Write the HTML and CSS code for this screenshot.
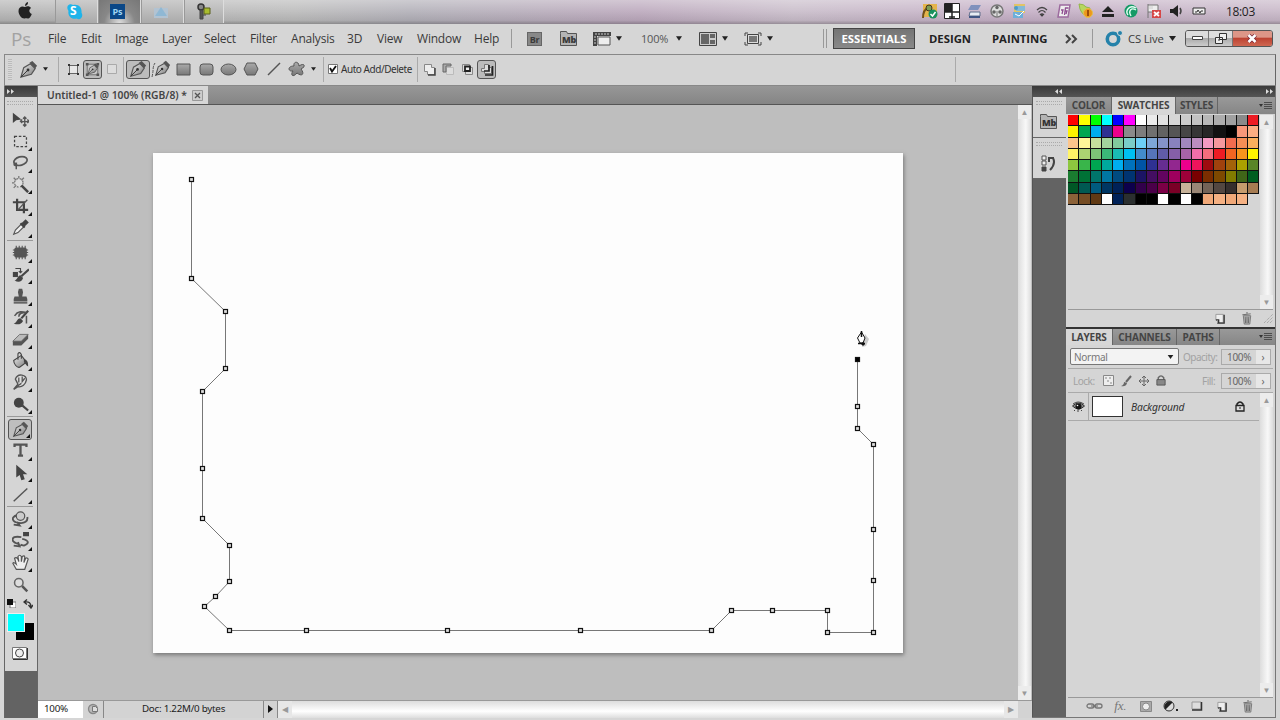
FILE: index.html
```
<!DOCTYPE html>
<html lang="en">
<head>
  <meta charset="UTF-8">
  <title>Untitled-1 @ 100% (RGB/8) *</title>
  <link rel="stylesheet" href="styles.css">
</head>
<body>
  <svg class="defs" width="0" height="0">
    <defs>
      <linearGradient id="gray" x1="0" y1="0" x2="0" y2="1"><stop offset="0" stop-color="#aaa"/><stop offset="1" stop-color="#777"/></linearGradient>
      <linearGradient id="skin" x1="0" y1="0" x2="1" y2="1"><stop offset="0" stop-color="#eee"/><stop offset="1" stop-color="#777"/></linearGradient>
      <symbol id="pen" viewBox="0 0 20 20"><path d="M2 18l3-10 7-4 5 5-4 6z" fill="url(#skin)" stroke="#555" stroke-width="1.300"/><path d="M2 18l7-7" stroke="#333"/><circle cx="9.500" cy="10.500" r="1.500" fill="#333"/><path d="M11 3l6 6 2-3-5-5z" fill="#555"/></symbol>
      <symbol id="down" viewBox="0 0 7 5"><path d="M0 0h7L3.500 5z" fill="#222"/></symbol>
      <symbol id="trash" viewBox="0 0 12 14"><path d="M2 4h8l-1 9H3z" fill="#bbb" stroke="#777"/><path d="M1 3l9-1M4 5l.5 7M6 5v7M8 5l-.5 7M5 1h2" stroke="#666"/></symbol>
      <symbol id="page" viewBox="0 0 12 12"><path d="M1.500 1.500h8v9h-5l-3-3z" fill="#eee" stroke="#999"/><path d="M10.500 2v9H3M1.500 7.500h3v3" fill="none" stroke="#333" stroke-width="1.500"/></symbol>
      <symbol id="menu" viewBox="0 0 13 8"><path d="M0 2h4L2 5z" fill="#333"/><path d="M5 .5h8M5 2.500h8M5 4.500h8M5 6.500h8" stroke="#444" stroke-width=".9"/></symbol>
      <symbol id="bridge" viewBox="0 0 17 15"><path d="M.5 2.500V.5h6l1 2h9v12H.5z" fill="#b4b4b4" stroke="#555"/></symbol>
    </defs>
  </svg>

  <header class="taskbar">
    <div class="apple"><svg width="14" height="17" viewBox="0 0 14 17"><path d="M7 5c2-1.500 5-1 6 1-2.500 1.500-2 5 .8 6-1 2.500-2.500 4.800-4 4.500-1.200-.4-2-.5-3.200 0C4 17 .5 13 .5 9 .5 5 4 3.500 7 5zM7 4c0-2 1-3.500 3-4 .2 2-1 3.800-3 4z" fill="#222"/></svg></div>
    <div class="task skype"><svg width="16" height="16" viewBox="0 0 16 16"><path d="M1 1.500C3-.5 5 .5 6 1c6-1.500 9 3 8.500 7.500C17 13 13 17 9.500 14.500 4 16 .5 11 1.500 7 0 5 0 3 1 1.500z" fill="#1eb4ea"/></svg><b>S</b></div>
    <div class="task active"><span class="ps-icon">Ps</span></div>
    <div class="task"><svg width="16" height="12" viewBox="0 0 16 12"><path d="M1 2h14v10H1z" fill="#b2c3d2"/><path d="M2 10l6-9 6 9z" fill="#8fb8d4"/></svg></div>
    <div class="task last"><svg width="14" height="17" viewBox="0 0 14 17"><circle cx="4" cy="4" r="3" fill="#888" stroke="#333" stroke-width="1.500"/><path d="M3 7h3v9H3zM6 12h3" fill="#555" stroke="#444"/><path d="M7 5h6v6H7z" fill="#a9bd2e" stroke="#5b611a"/></svg></div>
    <div class="tray">
      <svg width="16" height="16" viewBox="0 0 16 16"><path d="M1 1h14v13H1z" fill="#e4b44c"/><path d="M1 15c0-6 2-9 5-10" stroke="#71511c" stroke-width="2" fill="none"/><circle cx="7" cy="5" r="3" fill="#7c9c55" stroke="#44341c"/><circle cx="11" cy="11" r="4.500" fill="#17915d"/><path d="M8.500 11l2 2 3-4" stroke="#fff" stroke-width="1.500" fill="none"/></svg>
      <svg width="16" height="16" viewBox="0 0 16 16"><path d="M.5.5h15v15H.5z" fill="#fff" stroke="#222"/><path d="M1 1h7v8H1z" fill="#222"/><path d="M8 1v14M1 9h14M5 14h6" stroke="#222" stroke-width="1.500"/></svg>
      <svg width="16" height="16" viewBox="0 0 16 16"><path d="M4 2h10l-3 5H1z" fill="#8091bd"/><path d="M3 9h10v4H2z" fill="#e8ecf4" stroke="#606e8c"/><path d="M2 14h11" stroke="#405584" stroke-width="2"/></svg>
      <svg width="16" height="16" viewBox="0 0 16 16"><circle cx="8" cy="8" r="6" fill="#ddd" stroke="#777" stroke-width="1.500"/><circle cx="8" cy="4.500" r="1.700" fill="#666"/><circle cx="5" cy="9" r="1.800" fill="#666"/><circle cx="11" cy="9" r="1.800" fill="#666"/><path d="M8 8v5" stroke="#777"/></svg>
      <svg width="16" height="16" viewBox="0 0 16 16"><path d="M3 1h11v9H3z" fill="#e1c366"/><path d="M5 3h9v5H5z" fill="#84bad8"/><path d="M2 9h10v6H2z" fill="#6dafd9"/><path d="M4 11l4 2 5-5" stroke="#fff" fill="none"/><circle cx="5" cy="5" r="2" fill="#4c9bc9"/></svg>
      <svg width="16" height="16" viewBox="0 0 16 16"><path d="M3 7q5-5 10 0M4.500 9.500q3.500-4 7 0M6 12q2-2 4 0" stroke="#444" stroke-width="1.200" fill="none"/><circle cx="8" cy="12.500" r="1" fill="#333"/></svg>
      <svg width="16" height="16" viewBox="0 0 16 16"><path d="M4 2h10l-2 12H2z" fill="#eee" stroke="#9c6a9e" stroke-width="1.500"/><path d="M5 7h2l-1 4M8.500 12l1-7h3M9 8h2l-1 3" stroke="#8f4d91" stroke-width="1.300" fill="none"/></svg>
      <svg width="16" height="16" viewBox="0 0 16 16"><path d="M1 1q5 0 7 3l4 1-2 8q-8-1-9-12z" fill="#b7d75f" stroke="#93b748"/><circle cx="10" cy="10" r="4.500" fill="#ec981d" stroke="#e5bf4c"/><path d="M10 7v6" stroke="#853400" stroke-width="1.500"/></svg>
      <svg width="16" height="16" viewBox="0 0 16 16"><path d="M2 9l6-6 6 6zM2 11h12v3H2z" fill="#222"/></svg>
      <svg width="16" height="16" viewBox="0 0 16 16"><circle cx="8" cy="8" r="6.500" fill="#159a66"/><path d="M13 5C6 1 2 8 5 12M13 7C8 4 5 8 8 13" fill="none" stroke="#e4fff3" stroke-width="1.400"/></svg>
      <svg width="17" height="16" viewBox="0 0 17 16"><path d="M3 1v14M3 2h10v7H3" fill="#eee" stroke="#777"/><path d="M4 3h4v3H4z" fill="#ddd"/><path d="M7 7h9v8H7z" fill="#d64747"/><path d="M9 9l5 4M14 9l-5 4" stroke="#fff" stroke-width="1.700"/></svg>
      <svg width="16" height="16" viewBox="0 0 16 16"><path d="M2 6h3l5-4v12l-5-4H2z" fill="#222"/><path d="M12 5q2 3 0 6" stroke="#444" stroke-width="1.500" fill="none"/></svg>
      <svg width="16" height="16" viewBox="0 0 16 16"><path d="M2 5h12v6H2z" fill="#eee" stroke="#333"/><path d="M4 9h2l1-2 2 3 1-2h2" stroke="#333" fill="none"/></svg>
      <span class="clock">18:03</span>
    </div>
  </header>

  <nav class="menubar">
    <span class="logo">Ps</span>
    <span>File</span><span>Edit</span><span>Image</span><span>Layer</span><span>Select</span><span>Filter</span><span>Analysis</span><span>3D</span><span>View</span><span>Window</span><span>Help</span>
    <i class="sep"></i>
    <span class="launch br">Br</span>
    <span class="launch mb"><svg width="17" height="15"><use href="#bridge"/></svg><b>Mb</b></span>
    <span class="drop"><svg width="18" height="14" viewBox="0 0 18 14"><path d="M0 0h18v4H4v10H0z" fill="#444"/><path d="M5 5h12v8H5z" fill="#eee" stroke="#555"/><path d="M3 1v2M6 1v2M9 1v2M12 1v2M15 1v2M1 5h2M1 8h2M1 11h2" stroke="#ccc"/></svg><svg width="6" height="5"><use href="#down"/></svg></span>
    <span class="drop zoom">100%<svg width="6" height="5"><use href="#down"/></svg></span>
    <span class="drop"><svg width="18" height="14" viewBox="0 0 18 14"><path d="M.5.5h17v13H.5z" fill="#ccc" stroke="#444"/><path d="M2 2h8v10H2zM11 2h5v4h-5zM11 8h5v4h-5z" fill="#666"/></svg><svg width="6" height="5"><use href="#down"/></svg></span>
    <span class="drop"><svg width="18" height="14" viewBox="0 0 18 14"><path d="M3.500 2.500h11v9h-11z" fill="#ddd" stroke="#444"/><path d="M5 4h8v6H5z" fill="#777"/><path d="M1 4V1h3M14 1h3v3M17 10v3h-3M4 13H1v-3" fill="none" stroke="#444"/></svg><svg width="6" height="5"><use href="#down"/></svg></span>
    <i class="sep double"></i>
    <b class="mode selected">ESSENTIALS</b><b class="mode">DESIGN</b><b class="mode">PAINTING</b>
    <svg width="14" height="10" viewBox="0 0 14 10"><path d="M1 1l4 4-4 4M7 1l4 4-4 4" fill="none" stroke="#444" stroke-width="2"/></svg>
    <i class="sep"></i>
    <span class="live"><svg width="19" height="17" viewBox="0 0 19 17"><circle cx="8" cy="9" r="5.700" fill="none" stroke="#2582aa" stroke-width="3.600"/><circle cx="15" cy="3" r="2.500" fill="#2582aa" stroke="#ddd"/></svg><em>CS Live</em><svg width="7" height="5"><use href="#down"/></svg></span>
    <span class="winbuttons"><i><svg width="11" height="5"><path d="M.5.5h10v3H.5z" fill="#fff" stroke="#444"/></svg></i><i><svg width="12" height="11" viewBox="0 0 12 11"><path d="M4.500.5h7v6h-7zM.5 4.500h7v6h-7z" fill="#eee" stroke="#333"/><path d="M3 7h2" stroke="#333"/></svg></i><i class="close"><svg width="10" height="9" viewBox="0 0 10 9"><path d="M1.500 1l7 7M8.500 1l-7 7" stroke="#723" stroke-width="4"/><path d="M1.500 1l7 7M8.500 1l-7 7" stroke="#fff" stroke-width="2.600"/></svg></i></span>
  </nav>

  <section class="options">
    <i class="grip"></i>
    <span class="current"><svg width="19" height="19"><use href="#pen"/></svg><svg width="5" height="4"><use href="#down"/></svg></span>
    <i class="line"></i>
    <span><svg width="13" height="13" viewBox="0 0 13 13"><path d="M2.500 2.500h8v8h-8z" fill="#e8e8e8" stroke="#666"/><path d="M1 1h2v2H1zM10 1h2v2h-2zM1 10h2v2H1zM10 10h2v2h-2z" fill="#333"/></svg></span>
    <span class="pressed small"><svg width="15" height="15" viewBox="0 0 17 17"><path d="M2.500 2.500h12v12h-12z" fill="#c8c8c8" stroke="#666"/><path d="M1 1h3v3H1zM13 1h3v3h-3zM1 13h3v3H1zM13 13h3v3h-3z" fill="#555"/><use href="#pen" x="2" y="1" width="14" height="14"/></svg></span>
    <span><svg width="12" height="12"><path d="M1.500 1.500h9v9h-9z" fill="#ddd" stroke="#aaa"/></svg></span>
    <i class="line"></i>
    <span class="pressed"><svg width="18" height="18"><use href="#pen"/></svg></span>
    <span><svg width="20" height="18" viewBox="0 0 20 18"><path d="M1 17C3 9 1 8 4 3" fill="none" stroke="#555" stroke-dasharray="3 1"/><use href="#pen" x="3" y="0" width="17" height="17"/></svg></span>
    <span><svg width="15" height="13"><path d="M1 1h13v11H1z" fill="url(#gray)" stroke="#555"/></svg></span>
    <span><svg width="15" height="13"><rect x="1" y="1" width="13" height="11" rx="3" fill="url(#gray)" stroke="#555"/></svg></span>
    <span><svg width="17" height="13"><ellipse cx="8.500" cy="6.500" rx="7.500" ry="5.500" fill="url(#gray)" stroke="#555"/></svg></span>
    <span><svg width="16" height="14"><path d="M4 1h8l3 6-3 6H4L1 7z" fill="url(#gray)" stroke="#555"/></svg></span>
    <span><svg width="14" height="14"><path d="M1 13L13 1" stroke="#555" stroke-width="1.500"/></svg></span>
    <span><svg width="18" height="16" viewBox="0 0 18 16"><path d="M6 5c-1-5 5-5 5 0 6-4 7 1 2 3 4 5 1 8-4 4-4 5-7 2-4-2-5 1-6-5 1-5z" fill="url(#gray)" stroke="#555"/></svg></span>
    <span class="more"><svg width="5" height="4"><use href="#down"/></svg></span>
    <i class="line"></i>
    <label><svg width="10" height="10" viewBox="0 0 10 10"><path d="M.5.5h9v9h-9z" fill="#fff" stroke="#777"/><path d="M2 4l2 3.500L8 2" stroke="#111" stroke-width="1.800" fill="none"/></svg>Auto Add/Delete</label>
    <i class="line"></i>
    <span><svg width="13" height="13" viewBox="0 0 13 13"><path d="M1.500 1.500h7v3h3v7h-7v-3h-3z" fill="#eee" stroke="#888"/><path d="M12 5v7H5" stroke="#444" stroke-width="1.500" fill="none"/></svg></span>
    <span><svg width="13" height="13" viewBox="0 0 13 13"><path d="M4.500 4.500h7v7h-7z" fill="#ddd" stroke="#bbb"/><path d="M1 1h8v2H4v6H1z" fill="#aaa" stroke="#666"/></svg></span>
    <span><svg width="13" height="13" viewBox="0 0 13 13"><path d="M1.500 1.500h7v7h-7zM4.500 4.500h7v7h-7z" fill="#ddd" stroke="#888"/><path d="M4 3.500h5V8H4z" fill="#eee" stroke="#222" stroke-width="1.800"/></svg></span>
    <span class="pressed small"><svg width="14" height="14" viewBox="0 0 14 14"><path d="M1.500 6.500h3v-4h4v3h3v6h-7v-2h-3z" fill="#ddd" stroke="#777"/><path d="M12.500 4v9H5M9 3v6H4" fill="none" stroke="#222" stroke-width="1.700"/></svg></span>
    <i class="line end"></i>
  </section>

  <main class="workspace">
    <aside class="toolbox">
      <div class="darkbar"><svg width="8" height="5" viewBox="0 0 8 5"><path d="M0 0l3 2.500L0 5zM4 0l3 2.500L4 5z" fill="#ddd"/></svg></div>
      <div class="tools">
        <i class="dots"></i>
        <div class="tool plain"><svg viewBox="0 0 20 20"><path d="M1 2v12l4-3 6-1z" fill="#444"/><path d="M15 7v11M10 12.500h10M13 9l2-2 2 2M13 16l2 2 2-2M12 10l-2 2 2 2M18 10l2 2-2 2" fill="none" stroke="#555" stroke-width="1.600"/></svg></div>
        <div class="tool"><svg viewBox="0 0 20 20"><path d="M3 4h14v12H3z" fill="none" stroke="#444" stroke-width="1.500" stroke-dasharray="3 2"/></svg></div>
        <div class="tool"><svg viewBox="0 0 20 20"><ellipse cx="10" cy="8" rx="8" ry="5" fill="none" stroke="#555" stroke-width="2" transform="rotate(-15 11 8)"/><path d="M6 11c-5-1-4 4-1 2v5" fill="none" stroke="#555" stroke-width="1.700"/></svg></div>
        <div class="tool"><svg viewBox="0 0 20 20"><circle cx="8" cy="8" r="5" fill="#ddd" stroke="#777" stroke-dasharray="2 2" stroke-width="1.500"/><path d="M11 11l8 8" stroke="#444" stroke-width="3"/><path d="M8 0v3M0 8h3M2 2l3 3M14 2l-3 3M2 14l3-3" stroke="#777" stroke-width="1.500"/></svg></div>
        <div class="tool"><svg viewBox="0 0 20 20"><path d="M6 1v13h13M1 5h13v13" fill="none" stroke="#444" stroke-width="2.600"/><path d="M7 14l11-12" stroke="#555" stroke-width="1.500"/></svg></div>
        <div class="tool"><svg viewBox="0 0 20 20"><path d="M2 18l2-5 7-7 3 3-7 7z" fill="#eee" stroke="#555" stroke-width="1.300"/><path d="M10 5l5 5M12 6l4-4 2 2-4 4z" stroke="#444" stroke-width="2.500" fill="#444"/></svg></div>
        <hr>
        <div class="tool"><svg viewBox="0 0 20 20"><rect x="2.500" y="4" width="15" height="12" rx="3" fill="#555"/><path d="M5 2v16M8.500 2v16M12 2v16M15.500 2v16M1 7h18M1 10h18M1 13h18" stroke="#555" stroke-width="1.300"/></svg></div>
        <div class="tool"><svg viewBox="0 0 20 20"><path d="M20 4l-9 8" stroke="#444" stroke-width="2.500"/><path d="M3 17c3 0 4-6 7-6l3 3c-1 4-5 6-10 3z" fill="#444"/><path d="M1 7h6v6H1z" fill="#444"/><path d="M4 3h6v5M8 6l2 2 2-2" fill="none" stroke="#444" stroke-width="1.300"/></svg></div>
        <div class="tool"><svg viewBox="0 0 20 20"><path d="M8 1h4l1 4-1 5h5l1 3v3H2v-3l1-3h5L7 5z" fill="#555"/><path d="M2 17.500h16" stroke="#444" stroke-width="1.500"/></svg></div>
        <div class="tool"><svg viewBox="0 0 20 20"><path d="M19 2l-8 9" stroke="#444" stroke-width="2.500"/><path d="M2 17c5-1 3-6 8-6l3 3c-2 4-6 5-11 3z" fill="#444"/><path d="M3 8c4-6 9-5 14-4-6 0-9 1-9 5M17 8v9" fill="none" stroke="#555" stroke-width="1.800"/></svg></div>
        <div class="tool"><svg viewBox="0 0 20 20"><path d="M1 12L9 4h10l-8 8z" fill="#bbb" stroke="#666"/><path d="M1 12h10l8-8v5l-8 8H1z" fill="#555"/></svg></div>
        <div class="tool"><svg viewBox="0 0 20 20"><path d="M2 10l9-6 6 8-8 6c-3 1-7-4-7-8z" fill="url(#skin)" stroke="#444" stroke-width="1.300"/><path d="M7 9V2q2-3 4 1v5" fill="none" stroke="#444" stroke-width="1.300"/><path d="M14 8c5 2 5 5 5 9-3-1-3-4-5-5z" fill="#444"/></svg></div>
        <div class="tool"><svg viewBox="0 0 20 20"><path d="M2 18l5-6-3-6c3-8 13-5 13 1-1 5-5 9-10 8z" fill="#ddd" stroke="#555" stroke-width="1.600"/><path d="M8 4v6M12 3v6l3-4M5 15l6-4" stroke="#555" stroke-width="1.500" fill="none"/></svg></div>
        <div class="tool"><svg viewBox="0 0 20 20"><circle cx="8" cy="8" r="5.800" fill="#444"/><path d="M12 11l7 6" stroke="#444" stroke-width="2.500"/></svg></div>
        <hr>
        <div class="tool chosen"><svg viewBox="0 0 20 20"><use href="#pen"/></svg></div>
        <div class="tool"><svg viewBox="0 0 20 20"><path d="M3 6V3h14v3M10 3v13M7 16h6" fill="none" stroke="#555" stroke-width="2.700"/></svg></div>
        <div class="tool"><svg viewBox="0 0 20 20"><path d="M5 1v15l4-3 2 6 4-1-2-6h5z" fill="#444"/></svg></div>
        <div class="tool"><svg viewBox="0 0 20 20"><path d="M2 18L18 3" stroke="#555" stroke-width="1.700"/></svg></div>
        <hr>
        <div class="tool"><svg viewBox="0 0 20 20"><path d="M6 5c-8 2-6 8 2 9 7 1 11-2 10-7M2 16l7 1-3-4" fill="none" stroke="#555" stroke-width="2.200"/><circle cx="10" cy="6" r="5" fill="#ccc" stroke="#555" stroke-width="1.400"/></svg></div>
        <div class="tool"><svg viewBox="0 0 20 20"><path d="M11 6C-2 4-2 11 7 14M12 8c9 2 8 6 2 8l-4-1M2 16l7 1-2-5" fill="none" stroke="#555" stroke-width="2.200"/><path d="M13 0h7v5h-7z" fill="#444"/></svg></div>
        <div class="tool"><svg viewBox="0 0 20 20"><path d="M5 18L1 11q1-2 4 1L3 5q2-2 4 1l1 3-1-6q2-3 4 0v6l1-6q3-2 3 1l-1 6 2-5q2-1 3 1l-4 12z" fill="#eee" stroke="#555" stroke-width="1.400"/></svg></div>
        <div class="tool plain"><svg viewBox="0 0 20 20"><circle cx="8" cy="8" r="5" fill="#ddd" stroke="#666" stroke-width="1.800"/><path d="M12 12l6 6" stroke="#555" stroke-width="3"/></svg></div>
        <div class="swap"><svg width="9" height="9"><path d="M3 3h6v6H3z" fill="#fff" stroke="#777"/><path d="M0 0h6v6H0z" fill="#111"/></svg><svg width="10" height="10" viewBox="0 0 10 10"><path d="M2 3q6-1 6 5M4 .5L1 3l3 2.500M5.500 6L8 9l2-3" fill="none" stroke="#333" stroke-width="1.400"/></svg></div>
        <div class="colors"><i class="back"></i><i class="front"></i></div>
        <div class="mask"><svg width="16" height="13"><path d="M.5.5h14v11H.5z" fill="#fff" stroke="#777"/><path d="M15.500 1v11.500H1" stroke="#333" fill="none"/><circle cx="7.500" cy="6" r="4" fill="#eee" stroke="#444"/></svg></div>
      </div>
    </aside>

    <section class="document">
      <div class="tabs"><div class="tab">Untitled-1 @ 100% (RGB/8) *<svg width="11" height="11" viewBox="0 0 11 11"><path d="M.5.5h10v10H.5z" fill="#ccc" stroke="#999"/><path d="M3 3l5 5M8 3L3 8" stroke="#555" stroke-width="1.300"/></svg></div></div>
      <div class="view">
        <div class="pasteboard">
          <div class="canvas"><svg id="artwork" width="750" height="500" viewBox="153 153 750 500">
            <path id="workPath" fill="none" stroke="#777"/>
            <g id="anchors" fill="#ddd" stroke="#111" stroke-width="1.200"></g>
            <g transform="translate(856 331)"><path d="M9 3l4 5-3 7-4 1z" fill="#aaa" opacity=".6"/><path d="M5.500 1L9 7 7 12H4L1.500 7z" fill="#fff" stroke="#111"/><path d="M5.500 0v6M2 12.500h7" stroke="#111" stroke-width="1.500"/><path d="M7 11l2 2-2 2-2-2z" fill="#111"/></g>
          </svg></div>
        </div>
        <div class="scroll"><i>▲</i><i>▼</i></div>
      </div>
      <footer class="status"><span class="percent">100%</span><span class="ver"><svg width="12" height="12" viewBox="0 0 12 12"><circle cx="6" cy="6" r="4.500" fill="#bbb" stroke="#888" stroke-width="1.300"/><path d="M5.500 3.500v5h5v-3l-2-2z" fill="#ddd" stroke="#777"/></svg></span><span class="doc">Doc: 1.22M/0 bytes</span><span class="play"><svg width="5" height="8"><path d="M0 0l5 4-5 4z" fill="#111"/></svg></span><span class="hscroll"><i>◀</i><i>▶</i></span></footer>
    </section>

    <aside class="side">
      <div class="darkbar wide"><svg width="8" height="5" viewBox="0 0 8 5"><path d="M3 0L0 2.500 3 5zM7 0L4 2.500 7 5z" fill="#ddd"/></svg><svg width="8" height="5" viewBox="0 0 8 5"><path d="M0 0l3 2.500L0 5zM4 0l3 2.500L4 5z" fill="#ddd"/></svg></div>
      <div class="iconstrip">
        <div class="dock"><i class="dots"></i><span class="launch mb"><svg width="17" height="15"><use href="#bridge"/></svg><b>Mb</b></span></div>
        <div class="dock"><i class="dots"></i><svg width="15" height="17" viewBox="0 0 15 17"><path d="M1 1h4v4H1zM1 6h4v4H1z" fill="#eee" stroke="#555"/><path d="M1 12h4v4H1z" fill="#444" stroke="#444"/><path d="M12 3q3 6-3 12M8 7V3h5" fill="none" stroke="#444" stroke-width="2"/></svg></div>
      </div>
      <div class="panels">
        <div class="panel swatchpanel">
          <div class="panel-tabs top"><b>COLOR</b><b class="on">SWATCHES</b><b>STYLES</b><svg width="13" height="8"><use href="#menu"/></svg></div>
          <div class="panel-body"><div id="swatches"></div><div class="scroll"><i>▲</i><i>▼</i></div></div>
          <div class="panel-foot"><svg width="12" height="11"><use href="#page"/></svg><svg width="12" height="13"><use href="#trash"/></svg><svg class="resize" width="9" height="9" viewBox="0 0 9 9"><path d="M0 9l9-9M3 9l6-6M6 9l3-3" stroke="#999" stroke-dasharray="1 1"/></svg></div>
        </div>
        <div class="panel layerpanel">
          <div class="panel-tabs bottom"><b class="on">LAYERS</b><b>CHANNELS</b><b>PATHS</b><svg width="13" height="8"><use href="#menu"/></svg></div>
          <div class="row blend"><span class="select">Normal<svg width="7" height="4"><use href="#down"/></svg></span><span class="faint">Opacity:</span><span class="value">100%<i>›</i></span></div>
          <div class="row lock"><span class="faint">Lock:</span>
            <svg width="11" height="11" viewBox="0 0 11 11"><path d="M.5.5h10v10H.5z" fill="#eee" stroke="#888"/><path d="M2 2h2v2H2zM6 2h2v2H6zM4 5h2v2H4zM7 7h2v2H7z" fill="#bbb"/></svg>
            <svg width="12" height="12" viewBox="0 0 12 12"><path d="M11 1L6 7" stroke="#666" stroke-width="2"/><path d="M1 11q3-1 3-4l3 1q-1 4-6 3z" fill="#666"/></svg>
            <svg width="12" height="12" viewBox="0 0 12 12"><path d="M6 1v10M1 6h10M4 3l2-2 2 2M4 9l2 2 2-2M3 4L1 6l2 2M9 4l2 2-2 2" fill="none" stroke="#666"/></svg>
            <svg width="10" height="11" viewBox="0 0 10 12"><path d="M2 6V3q3-4 6 0v3" fill="none" stroke="#666" stroke-width="1.500"/><path d="M.5 5h9v6h-9z" fill="#888" stroke="#555"/></svg>
            <span class="faint fill">Fill:</span><span class="value">100%<i>›</i></span></div>
          <div class="layers"><div class="list"><div class="layer">
            <span class="eye"><svg width="13" height="12" viewBox="0 0 13 12"><path d="M.5 5q6-6 12 0-6 6-12 0z" fill="#888" stroke="#333"/><circle cx="6.500" cy="5.500" r="3" fill="#111"/><path d="M1 3q5-4 11 0M3 9l-1 1M6 9v2M9 9l1 1" stroke="#444" fill="none"/><circle cx="5.500" cy="4.500" r=".8" fill="#fff"/></svg></span>
            <span class="thumb"></span><em>Background</em>
            <svg width="10" height="11" viewBox="0 0 10 11"><path d="M2 5V3q3-4 6 0v2" fill="none" stroke="#222" stroke-width="1.500"/><path d="M1 4.500h8V10H1z" fill="#ddd" stroke="#222" stroke-width="1.300"/><path d="M5 6v2" stroke="#222"/></svg>
          </div></div><div class="scroll"><i>▲</i><i>▼</i></div></div>
          <div class="layer-foot">
            <svg width="17" height="8" viewBox="0 0 17 8"><rect x="1" y="2" width="7" height="4" rx="2" fill="none" stroke="#777" stroke-width="1.300"/><rect x="9" y="2" width="7" height="4" rx="2" fill="none" stroke="#777" stroke-width="1.300"/><path d="M5 4h7" stroke="#666"/></svg>
            <span class="fx">fx<small>.</small></span>
            <svg width="12" height="11"><path d="M.5.5h11v10H.5z" fill="#aaa" stroke="#888"/><circle cx="6" cy="5.500" r="3.500" fill="#eee" stroke="#888"/></svg>
            <svg width="16" height="12" viewBox="0 0 16 12"><circle cx="6" cy="6" r="5" fill="#ddd" stroke="#333"/><path d="M2.500 9.500l7-7a5 5 0 0 0-7 7z" fill="#222"/><path d="M13 10h2" stroke="#222" stroke-width="2"/></svg>
            <svg width="12" height="10"><path d="M1 1h9v7H1z" fill="#ddd" stroke="#999"/><path d="M10.500 1v8H1" fill="none" stroke="#333" stroke-width="1.500"/></svg>
            <svg width="12" height="11"><use href="#page"/></svg>
            <svg width="12" height="13"><use href="#trash"/></svg>
          </div>
        </div>
      </div>
    </aside>
  </main>

  <script>
    const points = [[191,179],[191,278],[225,311],[225,368],[202,391],[202,468],[202,518],[229,545],[229,581],[215,596],[204,606],[229,630],[306,630],[447,630],[580,630],[711,630],[731,610],[772,610],[827,610],[827,632],[873,632],[873,580],[873,529],[873,444],[857,428],[857,406],[857,359]];
    document.getElementById("workPath").setAttribute("d", "M" + points.map(p => (p[0] + .5) + " " + (p[1] + .5)).join("L"));
    document.getElementById("anchors").innerHTML = points.map((p, i) =>
      `<rect x="${p[0] - 1.5}" y="${p[1] - 1.5}" width="4" height="4"${i === points.length - 1 ? ' fill="#000"' : ''}/>`).join("");

    const rows = [
      "f00 ff0 0f0 0ff 00f f0f fff ebebeb e1e1e1 d7d7d7 ccc c2c2c2 b7b7b7 acacac a0a0a0 8a8a8a ed1c24",
      "fff200 00a651 00aeef 2e3192 ec008c 8a8a8a 7d7d7d 707070 626262 555 464646 363636 262626 111 000 f7977a fbad82",
      "fdc68c fff799 c6df9c a4d49d 81ca9d 7accc8 6dcff6 7ea7d8 8493ca 8882be a187be bc8dbf f49ac2 f6989d f26c4f f68e55 fbaf5c",
      "fff467 acd372 7cc576 3bb878 1abbb4 00bff3 438cca 5574b9 605ca8 855fa8 a763a8 f06ea9 f26d7d ed1c24 f26522 f7941d fff200",
      "8dc73f 39b54a 00a651 00a99d 00aeef 0072bc 0054a6 2e3192 662d91 92278f ec008c ed145b 9e0b0f a0410d a36209 aba000 598527",
      "1a7b30 007236 00746b 0076a3 004b80 003471 1b1464 440e62 630460 9e005d 9e0039 790000 7b2e00 7d4900 827b00 406618 005e20",
      "005826 005952 005b7f 003663 002157 0d004c 32004b 4b0049 7b0046 7a0026 c7b299 998675 736357 534741 362f2d c69c6d a67c52",
      "8c6239 754c24 603913 fff 002157 2b2f2f 000 000 fff 000 fff 000 f0a878 f5b183 f0a878 f5b183"
    ];
    document.getElementById("swatches").innerHTML = rows.join(" ").split(" ").map(c => `<i style="background:#${c}"></i>`).join("");
  </script>
</body>
</html>
```
FILE: styles.css
```
* {
  margin: 0;
  padding: 0;
  box-sizing: border-box;
}
body {
  width: 1280px;
  height: 720px;
  overflow: hidden;
  background: #d6d6d6;
  color: #333;
  font-family: "Open Sans", "Noto Sans", sans-serif;
  font-size: 12px;
}
svg {
  display: block;
  flex: none;
}
.defs {
  position: absolute;
}
.taskbar {
  display: flex;
  height: 24px;
  background: linear-gradient(rgba(255,255,255,.35), rgba(255,255,255,.1) 45%, rgba(0,0,0,.06) 85%, rgba(0,0,0,.25)), linear-gradient(90deg, #b5b5b5, #bbb 23%, #b2b0b8 32%, #bca9bd 50%, #c9bdca 62%, #c5afc6 80%, #c8b8c8);
}
.apple {
  width: 55px;
  padding: 2px 0 0 18px;
}
.task {
  position: relative;
  display: flex;
  align-items: center;
  justify-content: center;
  width: 43px;
  height: 23px;
  padding-right: 4px;
  border-left: 1px solid #999;
  border-right: 1px solid #ddd;
  background: linear-gradient(#ccc, #aaa);
}
.task.last {
  width: 40px;
  padding: 0;
}
.task.active {
  background: radial-gradient(circle at 50% 100%, #ddd, #888 50%, #777);
}
.skype b {
  position: absolute;
  left: 14px;
  top: 2px;
  color: #fff;
  font-size: 12px;
}
.ps-icon {
  width: 15px;
  height: 15px;
  background: #0a4787;
  color: #9ed4f4;
  font: bold 9px/15px "Open Sans", sans-serif;
  text-align: center;
}
.tray {
  display: flex;
  align-items: center;
  gap: 6.300px;
  height: 22px;
  margin-left: auto;
  padding-right: 25px;
}
.tray svg {
  margin-left: 0;
}
.clock {
  margin-left: 13px;
  color: #222;
  letter-spacing: -.3px;
}
.menubar {
  display: grid;
  grid-template-columns: 37px 33px 34px 47px 42px 46px 41px 56px 30px 40px 57px 37px 16px 33px 33px 48px 58px 45px 79px 10px 96px 63px 73px 27px 13px 80px 90px;
  align-items: center;
  height: 30px;
  padding: 0 0 1px 11px;
  color: #3a3a3a;
  white-space: nowrap;
  letter-spacing: -.2px;
}
.logo {
  color: #a2a2a2;
  font-size: 19px;
  line-height: 24px;
}
.sep {
  width: 1px;
  height: 19px;
  background: #999;
}
.double {
  width: 4px;
  background: none;
  border: solid #999;
  border-width: 0 1px;
}
.launch {
  display: block;
  position: relative;
  width: 17px;
  height: 15px;
  font: bold 9px/14px "Open Sans", sans-serif;
  letter-spacing: -.3px;
  text-align: center;
}
.br {
  width: 15px;
  height: 14px;
  background: #888;
  border: 1px solid #666;
  line-height: 13px;
}
.launch b {
  position: absolute;
  left: 2px;
  top: 2px;
}
.drop, .live {
  display: flex;
  align-items: center;
  gap: 5px;
}
.zoom {
  gap: 8px;
  color: #555;
  font-size: 11px;
}
.mode {
  color: #222;
  font-size: 11.300px;
  line-height: 20px;
  letter-spacing: 0;
}
.selected {
  width: 82px;
  height: 21px;
  border: 1px solid #444;
  background: linear-gradient(#747474, #898989);
  color: #fff;
  text-align: center;
}
.live {
  gap: 4px;
}
.live em {
  width: 37px;
  font: 11.300px "Open Sans", sans-serif;
}
.winbuttons {
  display: flex;
  width: 88px;
  height: 17px;
  border: 1px solid #555;
  border-radius: 3px;
  overflow: hidden;
}
.winbuttons i {
  display: flex;
  align-items: center;
  justify-content: center;
  width: 24px;
  border-right: 1px solid #777;
  background: linear-gradient(#ddd 45%, #aaa 50%, #ccc);
}
.winbuttons .close {
  width: 40px;
  border: 0;
  background: linear-gradient(#dd9687 40%, #bd4433 50%, #cf6751);
}
.options {
  display: grid;
  grid-template-columns: 11px 39px 5px 20px 18px 22px 3px 24px 22px 23px 22px 22px 23px 23px 23px 15px 5px 89px 3px 19px 19px 19px 21px 30px;
  align-items: center;
  height: 32px;
  margin: 0 4px;
  padding: 0 0 2px 3px;
  border: 1px solid #888;
  border-right-color: #666;
  background: #d5d5d5;
}
.options > span {
  display: flex;
  align-items: center;
  justify-content: center;
}
.options .current {
  justify-content: flex-start;
  gap: 5px;
}
.options .more {
  justify-content: flex-start;
  padding-left: 3px;
}
.grip {
  width: 4px;
  height: 21px;
  background: repeating-linear-gradient(#bbb 0 1px, #d9d9d9 1px 2px);
}
.line {
  width: 1px;
  height: 25px;
  background: #aaa;
}
.line.end {
  margin-left: 457px;
}
.options .pressed {
  height: 19px;
  border: 1px solid #555;
  border-radius: 3px;
  background: #bcbcbc;
}
.options .small {
  width: 19px;
}
.options label {
  display: flex;
  align-items: center;
  gap: 3px;
  font: 10px "Noto Sans", sans-serif;
  letter-spacing: -.45px;
  white-space: nowrap;
}
.workspace {
  display: grid;
  grid-template-columns: 34px 994px 244px;
  height: 632px;
  margin: 0 4px;
  border-bottom: 1px solid #777;
}
.darkbar {
  display: flex;
  align-items: center;
  height: 11px;
  padding-left: 2px;
  background: linear-gradient(#3a3a3a, #555);
}
.toolbox {
  border: solid #666;
  border-width: 0 1px;
  background: #636363;
}
.tools {
  height: 574px;
  padding: 4px 4px 4px 2px;
  background: #d5d5d5;
}
.dots {
  display: block;
  width: 26px;
  height: 4px;
  margin: 0 auto;
  border: dotted #aaa;
  border-width: 1px 0;
}
.tool {
  position: relative;
  display: flex;
  align-items: center;
  justify-content: center;
  height: 21.600px;
}
.dots + .tool {
  margin-top: 4px;
}
.tool svg {
  width: 17px;
  height: 17px;
}
.tool::after {
  content: "";
  position: absolute;
  right: 1px;
  bottom: 1px;
  border: solid transparent;
  border-width: 2px;
  border-right-color: #111;
  border-bottom-color: #111;
}
.tool.plain::after {
  display: none;
}
.tools hr {
  margin: 1px 0 1.600px;
  border: 0;
  border-top: 1px solid #999;
}
.chosen {
  margin: 0 1px;
  border: 1px solid #555;
  border-radius: 3px;
  background: #bebebe;
}
.swap {
  display: flex;
  justify-content: space-between;
  align-items: center;
  height: 18px;
}
.colors {
  display: grid;
  grid-template-columns: 9px 9px 9px;
  grid-template-rows: 10px 9px 8px;
}
.front {
  grid-area: 1 / 1 / 3 / 3;
  border: 1px solid #eee;
  background: #0ff;
}
.back {
  grid-area: 2 / 2 / 4 / 4;
  background: #000;
}
.mask {
  padding: 7px 0 0 5px;
}
.document {
  display: flex;
  flex-direction: column;
  background: #bebebe;
}
.tabs {
  height: 19px;
  border-bottom: 1px solid #555;
  background: linear-gradient(#979797, #858585);
}
.tab {
  display: flex;
  align-items: center;
  justify-content: space-between;
  width: 170px;
  height: 18px;
  padding: 0 5px 0 9px;
  background: #d7d7d7;
  color: #444;
  font: 600 10.300px "Noto Sans", sans-serif;
  white-space: nowrap;
}
.view {
  display: flex;
  height: 595px;
}
.pasteboard {
  width: 980px;
  padding: 48px 0 0 115px;
}
.canvas {
  width: 750px;
  height: 500px;
  background: #fdfdfd;
  box-shadow: 1px 2px 4px #777;
}
.scroll {
  display: flex;
  flex-direction: column;
  justify-content: space-between;
  width: 13px;
  background: linear-gradient(90deg, #ddd, #f8f8f8 60%, #ddd);
  color: #999;
  font-size: 8px;
}
.scroll i {
  height: 14px;
  background: #ececec;
  font-style: normal;
  line-height: 14px;
  text-align: center;
}
.status {
  display: flex;
  height: 18px;
  border-top: 1px solid #999;
  background: #d3d3d3;
  font: 9.800px/15px "Noto Sans", sans-serif;
  letter-spacing: -.25px;
  color: #222;
}
.percent {
  width: 45px;
  padding-left: 6px;
  background: #fff;
}
.ver, .doc, .play {
  display: flex;
  align-items: center;
  justify-content: center;
  padding-bottom: 2px;
  border-right: 1px solid #888;
}
.ver {
  width: 21px;
}
.doc {
  width: 160px;
}
.play {
  width: 14px;
}
.hscroll {
  display: flex;
  justify-content: space-between;
  width: 740px;
  background: linear-gradient(#ddd, #fff 60%, #ddd);
  color: #999;
  font-size: 8px;
}
.hscroll i {
  width: 14px;
  background: #e7e7e7;
  font-style: normal;
  text-align: center;
}
.side {
  display: grid;
  grid-template-columns: 34px 209px;
  grid-template-rows: 11px 620px;
  border-right: 1px solid #777;
}
.wide {
  grid-column: 1 / 3;
  justify-content: space-between;
  padding: 0 1px 0 23px;
}
.iconstrip {
  background: #636363;
  border-left: 1px solid #555;
}
.dock {
  display: flex;
  flex-direction: column;
  align-items: center;
  gap: 9px;
  height: 41px;
  padding: 4px 2px 0 0;
  border-bottom: 1px solid #666;
  background: #d5d5d5;
}
.panel {
  background: #d5d5d5;
}
.swatchpanel {
  height: 232px;
  border-bottom: 2px solid #333;
}
.panel-tabs {
  display: grid;
  align-items: center;
  background: linear-gradient(#999, #868686);
  color: #444;
  font-size: 10px;
}
.top {
  grid-template-columns: 46px 64px 42px 54px;
  height: 17px;
}
.bottom {
  grid-template-columns: 47px 64px 43px 52px;
  height: 16px;
}
.panel-tabs b {
  height: 100%;
  border-right: 1px solid #666;
  line-height: 16px;
  text-align: center;
  letter-spacing: -.2px;
}
.panel-tabs .on {
  background: #d7d7d7;
}
.panel-tabs svg {
  justify-self: end;
}
.panel-body {
  display: flex;
  justify-content: space-between;
  height: 196px;
  margin: 0 2px;
  padding-top: 1px;
  border-bottom: 1px solid #999;
}
#swatches {
  display: grid;
  grid-template-columns: repeat(17, 11.250px);
  grid-template-rows: repeat(8, 11.250px);
}
#swatches i {
  border: solid #111;
  border-width: 0 1px 1px 0;
}
.panel-foot {
  display: flex;
  align-items: center;
  justify-content: flex-end;
  gap: 15px;
  height: 16px;
  padding-right: 2px;
}
.resize {
  margin-left: -4px;
}
.row {
  display: flex;
  align-items: center;
  height: 24px;
  margin: 0 2px;
  border-bottom: 1px solid #aaa;
  font: 10px "Noto Sans", sans-serif;
  letter-spacing: -.3px;
}
.select {
  display: flex;
  align-items: center;
  justify-content: space-between;
  width: 109px;
  height: 17px;
  margin-left: 2px;
  padding: 0 4px 0 3px;
  border: 1px solid #777;
  border-radius: 2px;
  background: #f3f3f3;
  color: #777;
}
.faint {
  width: 41px;
  padding-left: 4px;
  color: #a2a2a2;
  letter-spacing: -.5px;
}
.value {
  flex: none;
  width: 50px;
  height: 16px;
  margin: 0 2px 0 auto;
  padding-left: 5px;
  border: 1px solid #aaa;
  color: #666;
  font-size: 10px;
  line-height: 14px;
}
.value i {
  float: right;
  width: 14px;
  background: #e7e7e7;
  font-style: normal;
  text-align: center;
}
.lock {
  gap: 6px;
}
.lock .faint {
  flex: none;
  width: 29px;
  padding-left: 5px;
}
.lock .fill {
  width: 16px;
  margin-left: auto;
  padding: 0;
}
.lock .value {
  margin-left: -3px;
}
.layers {
  display: flex;
  justify-content: space-between;
  height: 305px;
  margin: 0 2px;
  border-bottom: 1px solid #999;
}
.list {
  width: 191px;
}
.layer {
  display: flex;
  align-items: center;
  height: 28px;
  border-bottom: 1px solid #aaa;
}
.eye {
  display: flex;
  align-items: center;
  justify-content: center;
  width: 21px;
  height: 27px;
  border-right: 1px solid #aaa;
}
.thumb {
  width: 31px;
  height: 21px;
  margin-left: 3px;
  border: 1px solid #333;
  background: #fff;
}
.layer em {
  width: 112px;
  padding-left: 8px;
  font: italic 10.300px "Noto Sans", sans-serif;
  letter-spacing: -.2px;
}
.layer-foot {
  display: grid;
  grid-template-columns: repeat(7, 25.500px);
  align-items: center;
  justify-items: center;
  height: 16px;
  padding-left: 16px;
}
.fx {
  color: #777;
  font: italic 13px/14px "Liberation Serif", serif;
}
```
